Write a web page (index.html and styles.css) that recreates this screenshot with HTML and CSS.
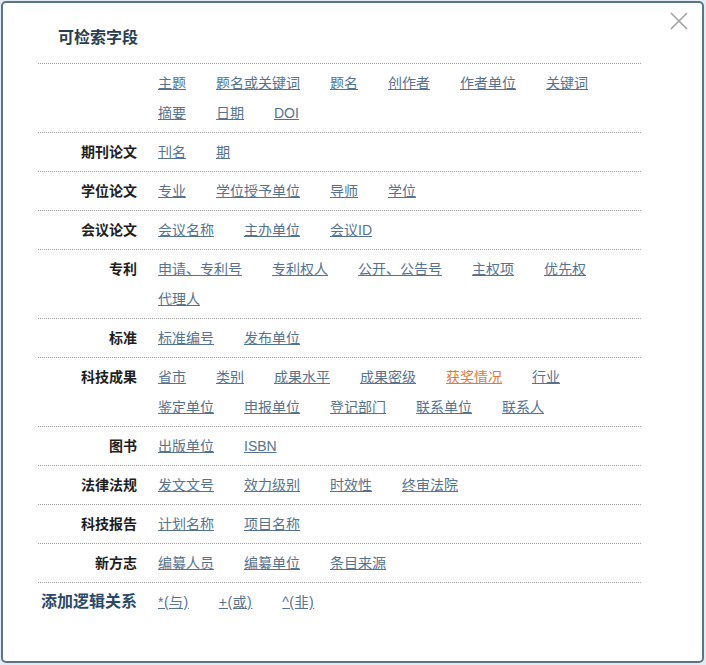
FILE: index.html
```html
<!DOCTYPE html>
<html lang="zh-CN">
<head>
<meta charset="utf-8">
<title>可检索字段</title>
<link rel="stylesheet" href="styles.css">
</head>
<body>
<div class="dialog">
  <button class="close" aria-label="关闭">
    <svg width="18" height="18" viewBox="0 0 18 18"><path d="M1 1 L17 17 M17 1 L1 17" stroke="#a3a3a3" stroke-width="1.6" fill="none"/></svg>
  </button>
  <div class="content">
    <h2 class="title">可检索字段</h2>
    <div class="row">
      <div class="label"></div>
      <div class="links">
        <a href="#">主题</a><a href="#">题名或关键词</a><a href="#">题名</a><a href="#">创作者</a><a href="#">作者单位</a><a href="#">关键词</a><a href="#">摘要</a><a href="#">日期</a><a href="#">DOI</a>
      </div>
    </div>
    <div class="row">
      <div class="label">期刊论文</div>
      <div class="links"><a href="#">刊名</a><a href="#">期</a></div>
    </div>
    <div class="row">
      <div class="label">学位论文</div>
      <div class="links"><a href="#">专业</a><a href="#">学位授予单位</a><a href="#">导师</a><a href="#">学位</a></div>
    </div>
    <div class="row">
      <div class="label">会议论文</div>
      <div class="links"><a href="#">会议名称</a><a href="#">主办单位</a><a href="#">会议ID</a></div>
    </div>
    <div class="row">
      <div class="label">专利</div>
      <div class="links"><a href="#">申请、专利号</a><a href="#">专利权人</a><a href="#">公开、公告号</a><a href="#">主权项</a><a href="#">优先权</a><a href="#">代理人</a></div>
    </div>
    <div class="row">
      <div class="label">标准</div>
      <div class="links"><a href="#">标准编号</a><a href="#">发布单位</a></div>
    </div>
    <div class="row">
      <div class="label">科技成果</div>
      <div class="links"><a href="#">省市</a><a href="#">类别</a><a href="#">成果水平</a><a href="#">成果密级</a><a href="#" class="active">获奖情况</a><a href="#">行业</a><a href="#">鉴定单位</a><a href="#">申报单位</a><a href="#">登记部门</a><a href="#">联系单位</a><a href="#">联系人</a></div>
    </div>
    <div class="row">
      <div class="label">图书</div>
      <div class="links"><a href="#">出版单位</a><a href="#">ISBN</a></div>
    </div>
    <div class="row">
      <div class="label">法律法规</div>
      <div class="links"><a href="#">发文文号</a><a href="#">效力级别</a><a href="#">时效性</a><a href="#">终审法院</a></div>
    </div>
    <div class="row">
      <div class="label">科技报告</div>
      <div class="links"><a href="#">计划名称</a><a href="#">项目名称</a></div>
    </div>
    <div class="row">
      <div class="label">新方志</div>
      <div class="links"><a href="#">编纂人员</a><a href="#">编纂单位</a><a href="#">条目来源</a></div>
    </div>
    <div class="row logic">
      <div class="label">添加逻辑关系</div>
      <div class="links"><a href="#">*(与)</a><a href="#">+(或)</a><a href="#">^(非)</a></div>
    </div>
  </div>
</div>
</body>
</html>
```
FILE: styles.css
```css
html, body {
  margin: 0;
  padding: 0;
}
body {
  background: #e4ecf2;
  font-family: "Liberation Sans", "Noto Sans CJK SC", sans-serif;
  width: 706px;
  height: 665px;
  overflow: hidden;
}
.dialog {
  position: relative;
  margin: 1px 0 0 1px;
  width: 703px;
  height: 662px;
  box-sizing: border-box;
  border: 2px solid #5a7686;
  border-radius: 5px;
  background: #fff;
}
.close {
  position: absolute;
  top: 9px;
  right: 14px;
  width: 18px;
  height: 18px;
  padding: 0;
  border: 0;
  background: none;
  display: block;
}
.close svg { display: block; }
.content {
  margin-left: 35px;
  width: 603px;
}
.title {
  margin: 0;
  padding: 24px 0 14px 20px;
  font-size: 16px;
  line-height: 22px;
  font-weight: bold;
  color: #2b3e52;
}
.row {
  display: flex;
  border-top: 1px dotted #a0a0a0;
  padding: 4px 0;
}
.label {
  width: 99px;
  flex: none;
  margin-right: 21px;
  text-align: right;
  font-size: 14px;
  font-weight: bold;
  line-height: 30px;
  color: #1e1e1e;
}
.links {
  flex: 1;
  display: flex;
  flex-wrap: wrap;
  column-gap: 30px;
  font-size: 14px;
  line-height: 30px;
}
.links a {
  color: #557391;
  text-decoration: underline;
  white-space: nowrap;
}
.links a.active {
  color: #e07b36;
}
.logic .label {
  font-size: 16px;
  color: #2c4a68;
}
.logic .links a {
  letter-spacing: 0.5px;
}
```
